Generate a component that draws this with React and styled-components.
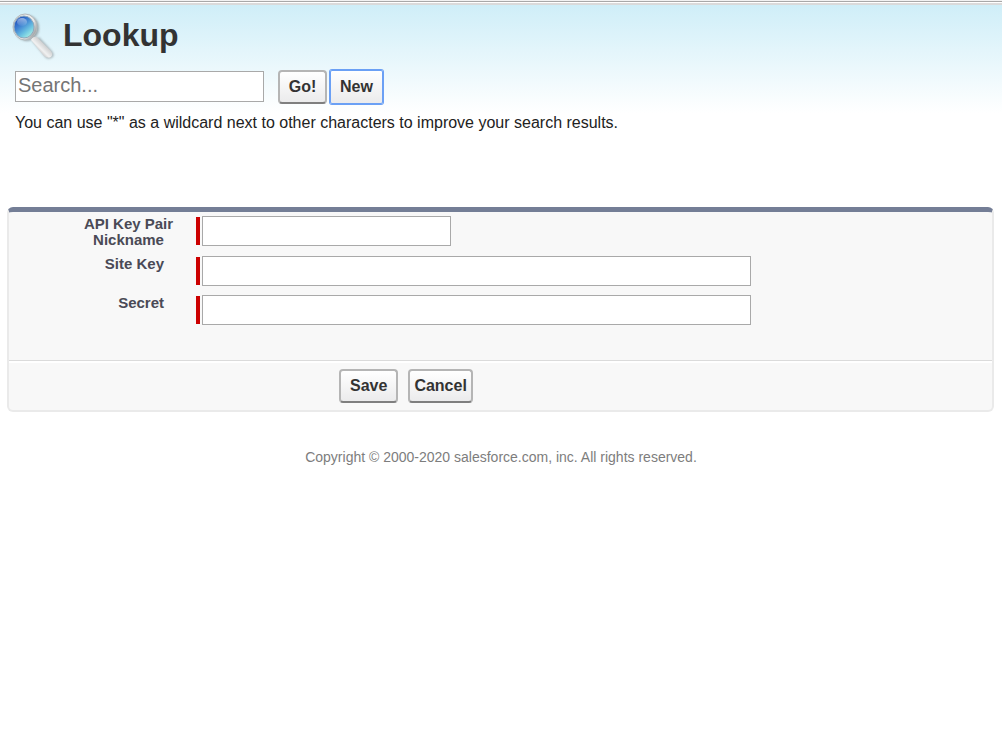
import React, { useState } from "react";
import styled, { createGlobalStyle } from "styled-components";

const GlobalStyle = createGlobalStyle`
  * {
    box-sizing: border-box;
  }
  body {
    margin: 0;
    background: #fff;
    color: #222;
    font-family: "Liberation Sans", Arial, sans-serif;
    font-size: 16px;
  }
`;

const fields = [
  { id: "nickname", label: "API Key Pair Nickname", short: true },
  { id: "siteKey", label: "Site Key" },
  { id: "secret", label: "Secret" },
];

const LookupIcon = () => (
  <svg width="48" height="52" viewBox="0 4 48 52" aria-hidden="true">
    <defs>
      <linearGradient id="lens" x1="0.15" y1="0.1" x2="0.8" y2="0.95">
        <stop offset="0" stopColor="#1f4fbc" />
        <stop offset="0.35" stopColor="#3f82d2" />
        <stop offset="0.7" stopColor="#6cc3e2" />
        <stop offset="1" stopColor="#a8f2e4" />
      </linearGradient>
      <linearGradient id="rim" x1="0" y1="0" x2="1" y2="0.6">
        <stop offset="0" stopColor="#c3c9cc" />
        <stop offset="0.4" stopColor="#f0f0f0" />
        <stop offset="0.75" stopColor="#e6e6e6" />
        <stop offset="1" stopColor="#a2a6a8" />
      </linearGradient>
      <linearGradient id="handle" x1="0" y1="1" x2="1" y2="0">
        <stop offset="0.2" stopColor="#9a9d9f" />
        <stop offset="0.45" stopColor="#f1f1f1" />
        <stop offset="0.85" stopColor="#a6a9ab" />
      </linearGradient>
      <linearGradient id="shine" x1="0" y1="0" x2="0" y2="1">
        <stop offset="0" stopColor="#fff" stopOpacity="0.5" />
        <stop offset="1" stopColor="#fff" stopOpacity="0.05" />
      </linearGradient>
      <filter id="soft" x="-20%" y="-20%" width="140%" height="140%">
        <feGaussianBlur stdDeviation="1" />
      </filter>
    </defs>
    <ellipse cx="19" cy="19" rx="12" ry="13" fill="#6f777b" opacity="0.6" filter="url(#soft)" />
    <path d="M24 32 L31 28 L43 41 Q47 45 45 48 Q41 51 38 49 Z" fill="#6f777b" opacity="0.5" filter="url(#soft)" />
    <path d="M23 31 Q25 27 29 28 L42 41 Q46 45 43 48 Q40 50 36 47 Z" fill="url(#handle)" />
    <ellipse cx="17" cy="18" rx="12" ry="13" fill="url(#rim)" stroke="#b5babc" strokeWidth="1" />
    <ellipse cx="16" cy="18" rx="10" ry="11" fill="url(#lens)" stroke="#8fa9bd" strokeWidth="1" />
    <ellipse cx="14" cy="13" rx="5" ry="4" fill="url(#shine)" />
  </svg>
);

const App = () => {
  const [search, setSearch] = useState("");
  const [values, setValues] = useState({ nickname: "", siteKey: "", secret: "" });

  return (
    <>
      <GlobalStyle />
      <Header>
        <TitleRow>
          <LookupIcon />
          <h1>Lookup</h1>
        </TitleRow>
        <SearchForm onSubmit={(e) => e.preventDefault()}>
          <SearchInput
            aria-label="Search"
            placeholder="Search..."
            value={search}
            onChange={(e) => setSearch(e.target.value)}
          />
          <Button type="submit">Go!</Button>
          <Button type="button" $active>New</Button>
        </SearchForm>
        <Hint>You can use "*" as a wildcard next to other characters to improve your search results.</Hint>
      </Header>

      <Panel onSubmit={(e) => e.preventDefault()}>
        <Fields>
          {fields.map(({ id, label, short }) => (
            <Row key={id}>
              <Label htmlFor={id} $wrap={short}>{label}</Label>
              <Required>
                <TextInput
                  id={id}
                  $short={short}
                  value={values[id]}
                  onChange={(e) => setValues({ ...values, [id]: e.target.value })}
                />
              </Required>
            </Row>
          ))}
        </Fields>
        <Actions>
          <Button type="submit" $wide>Save</Button>
          <Button type="button" $tight>Cancel</Button>
        </Actions>
      </Panel>

      <Footer>Copyright © 2000-2020 salesforce.com, inc. All rights reserved.</Footer>
    </>
  );
};

const Header = styled.header`
  padding: 13px 8px 0;
  background:
    linear-gradient(#f2f2f2, #f2f2f2) 0 0 / 100% 1px no-repeat,
    linear-gradient(#a8a8a8, #a8a8a8) 0 1px / 100% 1px no-repeat,
    linear-gradient(#fff, #fff) 0 2px / 100% 1px no-repeat,
    linear-gradient(#dadada, #dadada) 0 3px / 100% 2px no-repeat,
    linear-gradient(#cfeef8, #fff) 0 5px / 100% 108px no-repeat;
`;

const TitleRow = styled.div`
  display: flex;
  height: 57px;
  gap: 7px;

  h1 {
    margin: 0;
    color: #333;
    font-size: 32px;
    line-height: 44px;
  }
`;

const SearchForm = styled.form`
  display: flex;
  align-items: center;
  gap: 3px;
  padding-left: 7px;
`;

const inputBorder = "1px solid #a9a9a9";

const SearchInput = styled.input`
  width: 249px;
  height: 31px;
  margin: 0 11px 1px 0;
  padding: 0 2px 2px;
  border: ${inputBorder};
  font: 20px "Liberation Sans", Arial, sans-serif;

  &::placeholder {
    color: #757575;
  }
`;

const Button = styled.button`
  min-width: 49px;
  height: 34px;
  padding: 0 ${(p) => (p.$tight ? 4 : p.$wide ? 9 : 8)}px;
  border: 2px solid #b5b5b5;
  border-bottom-color: #7f7f7f;
  border-radius: 4px;
  background: linear-gradient(#fff, #ebebec);
  color: #333;
  font: bold 16px "Liberation Sans", Arial, sans-serif;
  cursor: pointer;
  ${(p) => p.$active && `
    padding: 0 9px;
    border: 1px solid #6ba0f5;
    border-radius: 2px;
    box-shadow: 0 0 0 1px #6ba0f5;
  `}
`;

const Hint = styled.p`
  margin: 9px 0 0;
  padding-left: 7px;
  line-height: 20px;
`;

const Panel = styled.form`
  margin: 74px 8px 0 7px;
  border: 2px solid #eaeaea;
  border-top: 5px solid #747e96;
  border-radius: 6px;
  background: #f8f8f8;
`;

const Fields = styled.div`
  display: grid;
  gap: 8px;
  padding: 4px 0 34px;
  border-bottom: 1px solid #dbdbdb;
`;

const Row = styled.div`
  display: flex;
  gap: 22px;
  align-items: flex-start;
  min-height: 31px;
`;

const Label = styled.label`
  width: 165px;
  flex: none;
  padding: ${(p) => (p.$wrap ? "0 0 0 74px" : "0 10px 0 0")};
  color: #4a4a56;
  font-size: 15px;
  font-weight: bold;
  line-height: 16px;
  text-align: ${(p) => (p.$wrap ? "center" : "right")};
`;

const Required = styled.div`
  display: flex;
  flex: 1;
  align-items: center;
  gap: 2px;
  padding-right: 24px;

  &::before {
    content: "";
    width: 4px;
    height: 28px;
    background: #c00;
  }
`;

const TextInput = styled.input`
  width: 100%;
  max-width: ${(p) => (p.$short ? 249 : 549)}px;
  height: 30px;
  padding: 0 4px;
  border: ${inputBorder};
  font: 20px "Liberation Sans", Arial, sans-serif;
`;

const Actions = styled.div`
  display: flex;
  gap: 10px;
  padding: 6px 0 7px 330px;
  border-top: 2px solid #fff;
`;

const Footer = styled.footer`
  margin-top: 37px;
  color: #7d7d7d;
  font-size: 14px;
  line-height: 16px;
  text-align: center;
`;

export default App;
